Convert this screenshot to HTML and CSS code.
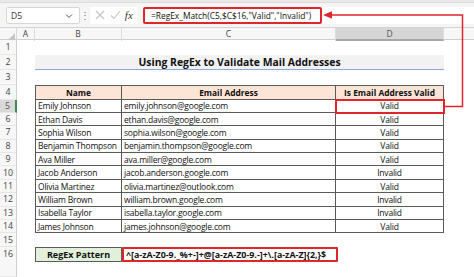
FILE: index.html
```html
<!DOCTYPE html>
<html>
<head>
<meta charset="utf-8">
<link rel="stylesheet" href="styles.css">
</head>
<body>
<div class="app">
  <div class="topband"></div>
  <div class="fbar">
    <div class="namebox"><span>D5</span>
      <svg class="chev" width="8" height="6" viewBox="0 0 8 6"><path d="M1 1.5 L4 4.5 L7 1.5" fill="none" stroke="#555" stroke-width="1"/></svg>
    </div>
    <div class="dots">⋮</div>
    <div class="fbtns">
      <svg width="10" height="10" viewBox="0 0 10 10"><path d="M1 1 L9 9 M9 1 L1 9" stroke="#c4c4c4" stroke-width="1.1"/></svg>
      <svg width="11" height="10" viewBox="0 0 11 10"><path d="M1 5.5 L4 8.5 L10 1" fill="none" stroke="#c4c4c4" stroke-width="1.1"/></svg>
      <span class="fx">fx</span>
    </div>
    <div class="finput"><span class="formula">=RegEx_Match(C5,$C$16,"Valid","Invalid")</span></div>
  </div>

  <div class="sheet">
    <div class="row colhead">
      <div class="corner"><span class="tri"></span></div>
      <div class="ch">A</div><div class="ch">B</div><div class="ch">C</div><div class="ch sel">D</div><div class="ch last"></div>
    </div>
    <div class="row r-tall"><div class="rh">1</div></div>
    <div class="row r-tall"><div class="rh">2</div><div></div><div class="title">Using RegEx to Validate Mail Addresses</div></div>
    <div class="row r-tall"><div class="rh">3</div></div>
    <div class="row r-head"><div class="rh">4</div><div></div>
      <div class="t tl th hd">Name</div><div class="t th hd">Email Address</div><div class="t th hd">Is Email Address Valid</div>
    </div>
    <div class="row"><div class="rh rsel">5</div><div></div><div class="t tl">Emily Johnson</div><div class="t">emily.johnson@google.com</div><div class="t c red">Valid</div></div>
    <div class="row"><div class="rh">6</div><div></div><div class="t tl">Ethan Davis</div><div class="t">ethan.davis@google.com</div><div class="t c">Valid</div></div>
    <div class="row"><div class="rh">7</div><div></div><div class="t tl">Sophia Wilson</div><div class="t">sophia.wilson@google.com</div><div class="t c">Valid</div></div>
    <div class="row"><div class="rh">8</div><div></div><div class="t tl">Benjamin Thompson</div><div class="t">benjamin.thompson@google.com</div><div class="t c">Valid</div></div>
    <div class="row"><div class="rh">9</div><div></div><div class="t tl">Ava Miller</div><div class="t">ava.miller@google.com</div><div class="t c">Valid</div></div>
    <div class="row"><div class="rh">10</div><div></div><div class="t tl">Jacob Anderson</div><div class="t">jacob.anderson.google.com</div><div class="t c">Invalid</div></div>
    <div class="row"><div class="rh">11</div><div></div><div class="t tl">Olivia Martinez</div><div class="t">olivia.martinez@outlook.com</div><div class="t c">Valid</div></div>
    <div class="row"><div class="rh">12</div><div></div><div class="t tl">William Brown</div><div class="t">william.brown.google.com</div><div class="t c">Invalid</div></div>
    <div class="row"><div class="rh">13</div><div></div><div class="t tl">Isabella Taylor</div><div class="t">isabella.taylor.google.com</div><div class="t c">Invalid</div></div>
    <div class="row"><div class="rh">14</div><div></div><div class="t tl">James Johnson</div><div class="t">james.johnson@google.com</div><div class="t c">Valid</div></div>
    <div class="row"><div class="rh">15</div></div>
    <div class="row"><div class="rh">16</div><div></div><div class="plabel">RegEx Pattern</div><div class="pattern">^[a-zA-Z0-9._%+-]+@[a-zA-Z0-9.-]+\.[a-zA-Z]{2,}$</div></div>
    <div class="row r-rest"><div class="rh"></div></div>
  </div>

  <svg class="arrow" width="474" height="277" viewBox="0 0 474 277">
    <polyline points="330,15 462.5,15 462.5,106.5 444,106.5" fill="none" stroke="#e0262a" stroke-width="1.5"/>
    <polygon points="323,15 332,11.3 332,18.7" fill="#e0262a"/>
  </svg>
</div>
</body>
</html>
```

FILE: styles.css
```css
* { box-sizing: border-box; }
html, body { margin: 0; padding: 0; background: #fff; }
body { width: 474px; height: 277px; overflow: hidden; font-family: "Open Sans", "Noto Sans", sans-serif; color: #111; }
.app { position: relative; width: 474px; height: 277px; overflow: hidden; }

.topband { height: 3px; background: #e9e9e9; border-bottom: 1px solid #dcdcdc; }
.fbar { height: 25px; background: #f5f5f5; border-bottom: 1px solid #d4d4d4; display: flex; align-items: center; padding: 0 0 0 6px; }
.namebox { width: 74px; height: 17px; background: #fff; border: 1px solid #d6d6d6; border-radius: 2px; display: flex; align-items: center; justify-content: space-between; padding: 0 6px 0 4px; font-size: 8.5px; color: #333; }
.chev { margin-top: 1px; }
.dots { width: 8px; text-align: center; font-size: 10px; color: #777; margin-left: 0; }
.fbtns { width: 48px; height: 17px; margin-left: 2px; background: #fff; display: flex; align-items: center; justify-content: space-around; padding: 0 3px; }
.fx { font-family: "Liberation Serif", "DejaVu Serif", serif; font-style: italic; font-size: 11px; color: #333; }
.finput { flex: 1; height: 17px; margin-left: 5px; background: #fff; display: flex; align-items: stretch; }
.formula { border: 2px solid #e0262a; border-radius: 2px; padding: 0 0 0 6px; width: 179px; font-size: 8.4px; line-height: 13px; color: #111; white-space: nowrap; }

.sheet { display: flex; flex-direction: column; }
.row { display: grid; grid-template-columns: 17px 18px 87px 214px 108px 30px; height: 13.4px; }
.r-tall { height: 15px; }
.r-head { height: 14.5px; }
.r-rest { height: 17px; }
.colhead { height: 12px; background: #f7f7f7; border-bottom: 1px solid #cfcfcf; }
.corner { border-right: 1px solid #d8d8d8; position: relative; }
.tri { position: absolute; right: 1px; bottom: 1px; width: 0; height: 0; border-left: 7px solid transparent; border-bottom: 7px solid #c6c6c6; }
.ch { font-size: 8.5px; line-height: 11px; text-align: center; color: #444; border-right: 1px solid #dcdcdc; }
.ch.last { border-right: none; }
.ch.sel { background: #d6d6d6; border-bottom: 2px solid #a8a8a8; color: #555; }

.rh { background: #f7f7f7; border-right: 1px solid #cfcfcf; border-bottom: 1px solid #e6e6e6; font-size: 8.8px; text-align: center; color: #444; display: flex; align-items: center; justify-content: center; }
.rh.rsel { background: #d9d9d9; border-right: 2px solid #3c8a5a; color: #555; }

.title { grid-column: span 3; background: #f2f2f2; border-bottom: 1px solid #8ea9db; font-weight: 700; font-size: 10.4px; text-align: center; display: flex; align-items: center; justify-content: center; color: #111; }

.t { border-right: 1px solid #5a5a5a; border-bottom: 1px solid #5a5a5a; font-size: 8.5px; letter-spacing: -0.2px; padding-left: 2px; display: flex; align-items: center; white-space: nowrap; overflow: hidden; color: #111; }
.tl { border-left: 1px solid #5a5a5a; }
.th { border-top: 1px solid #5a5a5a; }
.hd { background: #fce4d6; font-weight: 700; justify-content: center; padding-left: 0; font-size: 8.4px; letter-spacing: 0; }
.c { justify-content: center; padding-left: 0; }
.red { outline: 2px solid #e0262a; outline-offset: -1px; position: relative; }

.plabel { background: #e2efda; border: 1px solid #5a5a5a; font-weight: 700; font-size: 9px; display: flex; align-items: center; justify-content: center; }
.pattern { grid-column: span 2; width: 216px; border: 2px solid #e0262a; border-radius: 1px; font-weight: 700; font-size: 8.9px; display: flex; align-items: center; padding-left: 2px; white-space: nowrap; overflow: hidden; }

.arrow { position: absolute; left: 0; top: 0; pointer-events: none; }
```
